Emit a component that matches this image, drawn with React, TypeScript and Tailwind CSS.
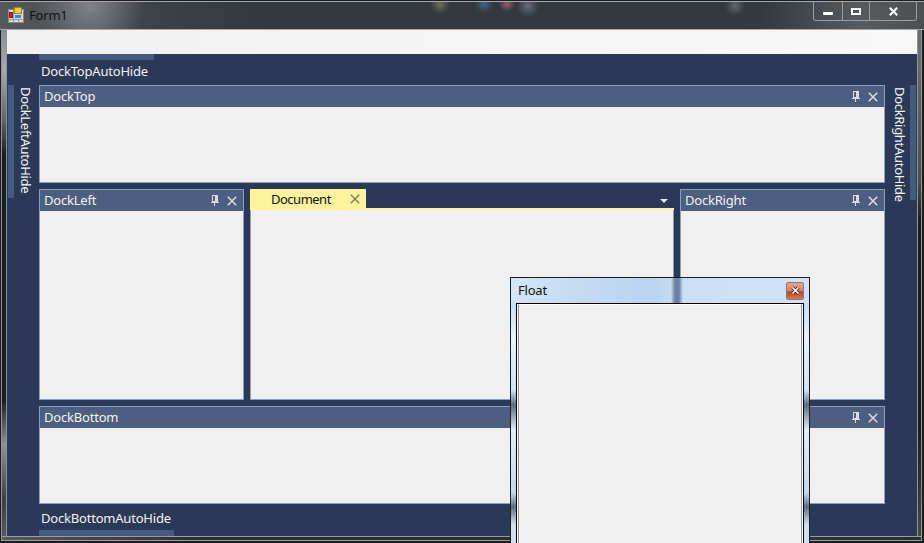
import React from "react"

function PinIcon() {
    return (
        <svg width="8" height="11" viewBox="0 0 8 11" shapeRendering="crispEdges" className="shrink-0">
            <path d="M1.5 .5h5v6h-5z" fill="none" stroke="#d8dce4" />
            <path d="M4 1h2v6h-2zM0 7h8v1h-8zM3 8h1v3h-1z" fill="#d8dce4" />
        </svg>
    )
}

function CloseIcon({ color = "#d8dce4" }: { color?: string }) {
    return (
        <svg width="10" height="10" viewBox="0 0 10 10" className="shrink-0">
            <path d="M.8 .8l8.4 8.4M9.2 .8l-8.4 8.4" stroke={color} strokeWidth="1.6" fill="none" />
        </svg>
    )
}

function FormIcon() {
    return (
        <svg width="16" height="16" viewBox="0 0 16 16" shapeRendering="crispEdges" className="shrink-0">
            <path d="M.5 2.5h15v13h-15z" fill="#d8d8d8" stroke="#8a8a8a" />
            <path d="M1 12h14v1h-14zM5 3h1v12h-1zM10 12h1v3h-1z" fill="#9a9a9a" />
            <path d="M1.5 5.5h3v5h-3z" fill="#e02828" stroke="#7a2020" />
            <path d="M6.5 .5h7v6h-7z" fill="#f8c840" stroke="#a88020" />
            <path d="M7 8h6v3h-6z" fill="#4a7fd8" />
        </svg>
    )
}

function DockPanel({ title, className }: { title: string; className: string }) {
    return (
        <div className={`flex flex-col border border-[#8d9dbd] bg-[#f0f0f0] ${className}`}>
            <div className="flex h-[21px] shrink-0 items-center justify-between bg-[#4c5f80] pl-1 pr-[6px] text-[#f2f2f2]">
                <span>{title}</span>
                <div className="flex items-center gap-2">
                    <PinIcon />
                    <CloseIcon />
                </div>
            </div>
        </div>
    )
}

function DocumentPane() {
    return (
        <div className="flex w-[424px] flex-col">
            <div className="flex h-[20px] shrink-0 items-end justify-between pr-[6px]">
                <div className="flex h-[19px] w-[116px] items-center justify-between bg-[#fff29d] pl-[21px] pr-[6px] pt-px text-[#111]">
                    <span className="tracking-[-0.5px]">Document</span>
                    <CloseIcon color="#8d8558" />
                </div>
                <svg width="8" height="4" viewBox="0 0 8 4" className="mb-[5px]">
                    <path d="M0 0h8l-4 4z" fill="#e8ebf0" />
                </svg>
            </div>
            <div className="h-[2px] shrink-0 bg-[#fff29d]" />
            <div className="flex-1 border-x border-b border-[#8d9dbd] bg-[#f0f0f0]" />
        </div>
    )
}

function FloatWindow() {
    return (
        <div className="absolute left-[510px] top-[277px] flex h-[300px] w-[300px] flex-col border border-[#1c1c1c] bg-[linear-gradient(180deg,#dcebf9_0px,#c9def3_26px,#e8f2fb_60px,#cfe2f5_112px,#5a6d88_127px,#e2edf7_152px,#c4d8ec_215px,#5a6d88_229px,#cfe0f0_246px)]">
            <div className="flex h-[25px] shrink-0 items-center justify-between bg-[linear-gradient(90deg,#d4e5f7_0px,#c6dcf3_60px,#b9d4f0_140px,#c4daf1_160px,#6b82a3_164px,#6b82a3_168px,#cce0f5_172px,#d0e3f6_300px)] pl-[7px] pr-[5px] text-[#111]">
                <span>Float</span>
                <div className="flex h-[18px] w-[18px] items-center justify-center rounded-[2px] border border-[#7d7f86] bg-[linear-gradient(180deg,#f0a08c_0%,#e47e66_48%,#b4431f_55%,#dd7a58_100%)]">
                    <svg width="9" height="9" viewBox="0 0 9 9">
                        <path d="M1.5 1.5l6 6M7.5 1.5l-6 6" stroke="#41302e" strokeWidth="3.2" fill="none" />
                        <path d="M1.5 1.5l6 6M7.5 1.5l-6 6" stroke="#fff" strokeWidth="1.7" fill="none" />
                    </svg>
                </div>
            </div>
            <div className="mx-[5px] flex-1 border border-black bg-white pl-px pr-px pt-px">
                <div className="h-full border-x border-[#8d9dbd] bg-[#f0f0f0]" />
            </div>
        </div>
    )
}

export default function App() {
    return (
        <div className="relative flex h-[543px] w-[924px] flex-col overflow-hidden bg-[#1b1e20] pt-px font-['Noto_Sans','Liberation_Sans',sans-serif] text-[13px] leading-none tracking-[-0.2px]">
            {/* Aero title bar */}
            <div className="flex h-[29px] shrink-0 items-start justify-between border-y border-[#a4a8ab] bg-[radial-gradient(circle_at_90px_3px,#7d8388_0px,transparent_55px),radial-gradient(circle_at_440px_2px,#6e6d5c_0px,transparent_10px),radial-gradient(circle_at_484px_2px,#426489_0px,transparent_9px),radial-gradient(circle_at_507px_2px,#8f6166_0px,transparent_8px),radial-gradient(circle_at_528px_4px,#626d78_0px,transparent_11px),radial-gradient(circle_at_735px_4px,#5f666c_0px,transparent_10px),linear-gradient(90deg,#55595c_0px,#3e4449_130px,#32393f_260px,#32393f_760px,#565b5f_860px,#4b4f52_924px)]">
                <div className="flex items-center gap-[4px] pl-[8px] pt-[5px] text-[#111]">
                    <FormIcon />
                    <span className="ml-[1px]">Form1</span>
                </div>
                <div className="mr-[7px] flex h-[19px] w-[104px] rounded-b-[3px] border-x border-b border-[#9a9ea1]">
                    <div className="flex w-[29px] items-center justify-center border-r border-[#9a9ea1] pt-[4px]">
                        <div className="h-[3px] w-[10px] bg-white" />
                    </div>
                    <div className="flex w-[27px] items-center justify-center border-r border-[#9a9ea1]">
                        <div className="h-[7px] w-[10px] border-2 border-white" />
                    </div>
                    <div className="flex flex-1 items-center justify-center">
                        <svg width="9" height="9" viewBox="0 0 9 9">
                            <path d="M.8 .8l7.4 7.4M8.2 .8l-7.4 7.4" stroke="#fff" strokeWidth="2.2" fill="none" />
                        </svg>
                    </div>
                </div>
            </div>

            <div className="flex min-h-0 flex-1">
                <div className="ml-px w-[6px] shrink-0 border-x border-[#8f9497] bg-[linear-gradient(180deg,#8a8f92_0px,#a6abad_40px,#5f6467_90px,#1b1e20_125px,#1b1e20_370px,#8c9195_415px,#3c4043_470px,#55595c_507px)]" />

                {/* Client area */}
                <div className="flex min-w-0 flex-1 flex-col">
                    <div className="h-[24px] shrink-0 bg-[linear-gradient(90deg,#f1f1f1,#f8f8f8)]" />
                    <div className="flex min-h-0 flex-1 flex-col bg-[#293957] text-[#f2f2f2]">
                        {/* top auto hide */}
                        <div className="h-[31px] shrink-0 pl-[32px]">
                            <div className="h-[6px] w-[115px] bg-[#465a7d]" />
                            <div className="pl-[2px] pt-[5px]">DockTopAutoHide</div>
                        </div>

                        <div className="flex min-h-0 flex-1">
                            <div className="flex w-[32px] shrink-0 items-start pl-px">
                                <div className="h-[113px] w-[6px] bg-[#465a7d]" />
                                <div className="pl-[5px] pt-[2px] tracking-[-0.3px] [writing-mode:vertical-rl]">DockLeftAutoHide</div>
                            </div>

                            <div className="flex w-[846px] flex-col">
                                <DockPanel title="DockTop" className="h-[98px] shrink-0" />
                                <div className="mt-[5px] flex h-[212px] shrink-0 gap-[6px]">
                                    <DockPanel title="DockLeft" className="mt-px w-[205px]" />
                                    <DocumentPane />
                                    <DockPanel title="DockRight" className="mt-px w-[205px]" />
                                </div>
                                <DockPanel title="DockBottom" className="mt-[6px] h-[98px] shrink-0" />
                            </div>

                            <div className="flex w-[32px] shrink-0 items-start justify-end pr-px">
                                <div className="pr-[4px] pt-[2px] tracking-[-0.3px] [writing-mode:vertical-rl]">DockRightAutoHide</div>
                                <div className="h-[115px] w-[6px] bg-[#465a7d]" />
                            </div>
                        </div>

                        {/* bottom auto hide */}
                        <div className="h-[32px] shrink-0 pl-[32px]">
                            <div className="pl-[2px] pt-[8px]">DockBottomAutoHide</div>
                            <div className="mt-[5px] h-[6px] w-[135px] bg-[#465a7d]" />
                        </div>
                    </div>
                </div>

                <div className="mr-[2px] w-[5px] shrink-0 border-x border-[#8f9497] bg-[linear-gradient(180deg,#6a6f72_0px,#4a4e51_150px,#1b1e20_190px,#1b1e20_400px,#44484b_507px)]" />
            </div>

            <div className="h-[7px] shrink-0 pb-[2px]">
                <div className="mr-[2px] ml-px h-full border-x border-y border-[#9a9ea1] bg-[linear-gradient(90deg,#55595c_0px,#2b2f32_200px,#2b2f32_560px,#8a8f92_600px,#33373a_700px,#2b2f32_924px)]" />
            </div>

            <FloatWindow />
        </div>
    )
}
